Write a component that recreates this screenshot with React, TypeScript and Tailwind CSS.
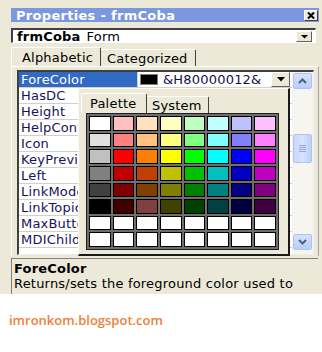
import React from "react";

const palette: string[][] = [
  ["#ffffff", "#ffc0c0", "#ffe0c0", "#ffffc0", "#c0ffc0", "#c0ffff", "#c0c0ff", "#ffc0ff"],
  ["#e0e0e0", "#ff8080", "#ffc080", "#ffff80", "#80ff80", "#80ffff", "#8080ff", "#ff80ff"],
  ["#c0c0c0", "#ff0000", "#ff8000", "#ffff00", "#00ff00", "#00ffff", "#0000ff", "#ff00ff"],
  ["#808080", "#c00000", "#c04000", "#c0c000", "#00c000", "#00c0c0", "#0000c0", "#c000c0"],
  ["#404040", "#800000", "#804000", "#808000", "#008000", "#008080", "#000080", "#800080"],
  ["#000000", "#400000", "#804040", "#404000", "#004000", "#004040", "#000040", "#400040"],
  ["#ffffff", "#ffffff", "#ffffff", "#ffffff", "#ffffff", "#ffffff", "#ffffff", "#ffffff"],
  ["#ffffff", "#ffffff", "#ffffff", "#ffffff", "#ffffff", "#ffffff", "#ffffff", "#ffffff"],
];

const props = [
  "HasDC",
  "Height",
  "HelpContextID",
  "Icon",
  "KeyPreview",
  "Left",
  "LinkMode",
  "LinkTopic",
  "MaxButton",
  "MDIChild",
];

function DownTri() {
  return (
    <svg width="8" height="5" viewBox="0 0 8 5">
      <path d="M0 0 H8 L4 4.5 Z" fill="#000" />
    </svg>
  );
}

function ScrollBtn({ up }: { up: boolean }) {
  return (
    <div className="h-[16px] w-[19px] rounded-[2px] border border-[#b0c4f2] bg-[linear-gradient(180deg,#d6e2fd,#b9cdf9)] flex items-center justify-center">
      <svg width="9" height="6" viewBox="0 0 9 6">
        {up ? (
          <path d="M1 5 L4.5 1.5 L8 5" stroke="#4d6185" strokeWidth="2" fill="none" />
        ) : (
          <path d="M1 1 L4.5 4.5 L8 1" stroke="#4d6185" strokeWidth="2" fill="none" />
        )}
      </svg>
    </div>
  );
}

export default function App() {
  return (
    <div className="relative w-[322px] h-[352px] bg-white overflow-hidden font-['DejaVu_Sans',sans-serif] text-[13px] tracking-[0.2px] text-black">
      {/* Window */}
      <div className="h-[294px] bg-[#ece9d8] pt-[8px] pl-[11px] pr-[3px] flex flex-col">
        {/* Title bar */}
        <div className="h-[14px] bg-[#7b97df] flex items-center justify-between pl-[5px] pr-[1px]">
          <span className="text-white font-bold text-[13px] leading-none tracking-[0.3px]">
            Properties - frmCoba
          </span>
          <div className="w-[14px] h-[11px] bg-[#ece9d8] border-t border-l border-white border-r border-b border-r-[#404040] border-b-[#404040] flex items-center justify-center">
            <svg width="8" height="7" viewBox="0 0 8 7">
              <path d="M1 0.5 L7 6.5 M7 0.5 L1 6.5" stroke="#000" strokeWidth="2" />
            </svg>
          </div>
        </div>

        {/* Object combo */}
        <div className="mt-[6px] mr-[3px] h-[15px] bg-white border-t-2 border-l-2 border-t-[#404040] border-l-[#404040] border-b border-r border-b-white border-r-white flex items-center pl-[4px] leading-none">
          <span className="font-bold">frmCoba</span>
          <span className="ml-[6px]">Form</span>
          <div className="ml-auto mr-[3px] self-end w-[16px] h-[11px] bg-[#ece9d8] border-t border-l border-white border-r border-b border-r-[#606060] border-b-[#606060] flex items-center justify-center">
            <svg width="7" height="4" viewBox="0 0 7 4">
              <path d="M0 0 H7 L3.5 3.5 Z" fill="#000" />
            </svg>
          </div>
        </div>

        {/* Tabs */}
        <div className="mt-[4px] h-[19px] flex items-end">
          <div className="relative z-10 w-[90px] h-[19px] bg-[#ece9d8] border-t border-l border-white border-r border-r-[#404040] rounded-t-[2px] flex items-center pl-[10px] leading-none">
            Alphabetic
          </div>
          <div className="w-[95px] h-[17px] border-t border-white border-r border-r-[#404040] rounded-tr-[2px] flex items-center pl-[6px] leading-none">
            Categorized
          </div>
        </div>

        {/* Tab panel */}
        <div className="h-[190px] border-t border-l border-white border-r border-r-[#a0a0a0] pl-[5px] pt-[3px]">
          <div className="w-[297px] h-[185px] border-t-2 border-l-2 border-t-[#404040] border-l-[#404040] border-r border-b border-r-[#f0f0f0] border-b-[#f0f0f0] bg-white flex">
            {/* Rows */}
            <div className="w-[273px] h-full overflow-hidden flex flex-col">
              <div className="h-[16px] shrink-0 border-b border-[#d4d0c8] flex">
                <div className="w-[119px] bg-[#316ac5] text-white pl-[2px] flex items-center leading-none border-r border-[#d4d0c8]">
                  ForeColor
                </div>
                <div className="flex-1 flex items-center overflow-hidden">
                  <div className="ml-[2px] w-[18px] h-[11px] bg-black border border-[#808080]" />
                  <span className="ml-[5px] flex-1 overflow-hidden whitespace-nowrap leading-none text-[#10104a]">
                    &amp;H80000012&amp;
                  </span>
                  <div className="mr-[2px] w-[19px] h-[15px] bg-[#ece9d8] border-t border-l border-white border-r border-b border-r-[#606060] border-b-[#606060] flex items-center justify-center">
                    <DownTri />
                  </div>
                </div>
              </div>
              {props.map((p) => (
                <div key={p} className="h-[16px] shrink-0 border-b border-[#d4d0c8] flex">
                  <div className="w-[119px] pl-[2px] flex items-center leading-none border-r border-[#d4d0c8] text-[#14145a] whitespace-nowrap overflow-hidden">
                    {p}
                  </div>
                  <div className="flex-1" />
                </div>
              ))}
              <div className="h-[16px] shrink-0 flex">
                <div className="w-[119px] border-r border-[#d4d0c8]" />
              </div>
            </div>
            {/* Scrollbar */}
            <div className="w-[21px] h-full bg-[#f6f5f0] flex flex-col items-center pt-[1px] pb-[4px]">
              <ScrollBtn up />
              <div className="mt-[45px] h-[29px] w-[19px] rounded-[2px] border border-[#b0c4f2] bg-[linear-gradient(90deg,#c8d7fc,#d8e4fe,#bccff9)] flex flex-col items-center justify-center gap-[1px]">
                <div className="w-[7px] h-[1px] bg-[#8fa8e6]" />
                <div className="w-[7px] h-[1px] bg-[#8fa8e6]" />
                <div className="w-[7px] h-[1px] bg-[#8fa8e6]" />
                <div className="w-[7px] h-[1px] bg-[#8fa8e6]" />
              </div>
              <div className="flex-1" />
              <ScrollBtn up={false} />
            </div>
          </div>
        </div>

        {/* Description */}
        <div className="mt-[2px] h-[36px] mr-[1px] border-t border-l border-[#808080] pl-[2px] pt-[2px] leading-[15px]">
          <div className="font-bold">ForeColor</div>
          <div className="whitespace-nowrap">Returns/sets the foreground color used to</div>
        </div>
      </div>

      {/* Footer text */}
      <div className="mt-[17px] pl-[9px] font-['Open_Sans',sans-serif] font-semibold text-[13px] leading-[18px] tracking-normal text-[#ef8137]">
        imronkom.blogspot.com
      </div>

      {/* Palette popup */}
      <div className="absolute left-[78px] top-[88px] w-[212px] h-[168px] z-20 bg-[#ece9d8] border-t border-l border-[#fbfbf8] border-r-2 border-b-2 border-r-[#1a1a1a] border-b-[#1a1a1a] pl-[2px] pt-[4px]">
        <div className="h-[20px] flex items-end">
          <div className="relative z-10 w-[66px] h-[20px] bg-[#ece9d8] border-t border-l border-white border-r border-r-[#404040] rounded-t-[2px] flex items-center pl-[8px] leading-none">
            Palette
          </div>
          <div className="w-[62px] h-[17px] border-t border-white border-r border-r-[#404040] rounded-tr-[2px] flex items-center pl-[5px] leading-none">
            System
          </div>
        </div>
        <div className="ml-[5px] w-[193px] h-[137px] border border-[#202020] bg-[#6e6e6e] p-[2px] grid grid-cols-8 grid-rows-8 gap-[2px]">
          {palette.flatMap((row, r) =>
            row.map((c, i) => (
              <div
                key={`${r}-${i}`}
                className="border border-black"
                style={{ backgroundColor: c }}
              />
            ))
          )}
        </div>
      </div>
    </div>
  );
}
